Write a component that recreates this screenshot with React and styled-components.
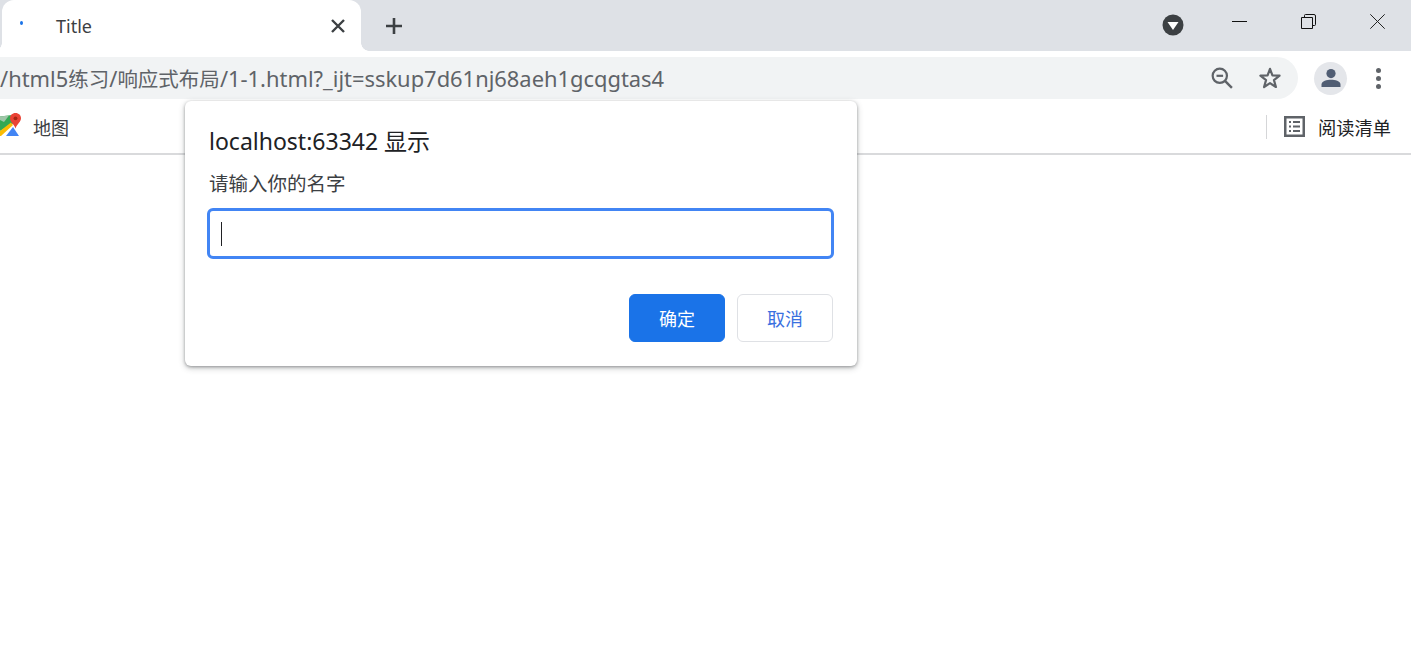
import styled, { createGlobalStyle } from "styled-components";

const GlobalStyle = createGlobalStyle`
  html, body {
    margin: 0;
    height: 100%;
    background: #fff;
    overflow: hidden;
    font-family: "Noto Sans CJK SC", "Noto Sans", sans-serif;
  }
`;

const App = () => {
  return (
    <Page>
      <GlobalStyle />
      <TabStrip>
        <Tab>
          <Favicon />
          <TabTitle>Title</TabTitle>
          <TabClose viewBox="0 0 14 14">
            <path d="M1 1 L13 13 M13 1 L1 13" />
          </TabClose>
        </Tab>
        <NewTab viewBox="0 0 18 18">
          <path d="M9 1 V17 M1 9 H17" />
        </NewTab>
        <Spacer />
        <MediaBadge viewBox="0 0 22 22">
          <circle cx="11" cy="11" r="10.5" fill="#3c4043" />
          <path d="M5.5 8 H16.5 L11 16 Z" fill="#fff" />
        </MediaBadge>
        <WindowButtons>
          <WindowButton>
            <svg width="15" height="15" viewBox="0 0 15 15">
              <path d="M0 7.5 H15" stroke="#111" fill="none" />
            </svg>
          </WindowButton>
          <WindowButton>
            <svg width="15" height="15" viewBox="0 0 15 15">
              <path d="M0.5 3.5 H11.5 V14.5 H0.5 Z M3.5 3 V1.5 Q3.5 0.5 4.5 0.5 H13 Q14.5 0.5 14.5 2 V10.5 Q14.5 11.5 13.5 11.5 H12" stroke="#111" fill="none" />
            </svg>
          </WindowButton>
          <WindowButton>
            <svg width="15" height="15" viewBox="0 0 15 15">
              <path d="M0.3 0.3 L14.7 14.7 M14.7 0.3 L0.3 14.7" stroke="#222" fill="none" />
            </svg>
          </WindowButton>
        </WindowButtons>
      </TabStrip>

      <Toolbar>
        <Omnibox>
          <Url>
            /html5<Han>练习</Han>/<Han>响应式布局</Han>/1-1.html?_ijt=sskup7d61nj68aeh1gcqgtas4
          </Url>
          <OmniIcon viewBox="0 0 20 20">
            <circle cx="8" cy="8" r="6.5" fill="none" stroke="#5f6368" strokeWidth="2" />
            <path d="M5 8 H11" stroke="#5f6368" strokeWidth="2" fill="none" />
            <path d="M12.7 12.7 L19 19" stroke="#5f6368" strokeWidth="2.2" fill="none" />
          </OmniIcon>
          <OmniIcon viewBox="1 1 20 20">
            <path
              d="M11 2.6 L13.2 8.6 L19.7 8.9 L14.6 12.9 L16.4 19.2 L11 15.6 L5.6 19.2 L7.4 12.9 L2.3 8.9 L8.8 8.6 Z"
              fill="none"
              stroke="#5f6368"
              strokeWidth="2"
              strokeLinejoin="round"
            />
          </OmniIcon>
        </Omnibox>
        <Avatar>
          <svg width="20" height="20" viewBox="0 0 20 20">
            <circle cx="10" cy="5.6" r="4.6" fill="#505d73" />
            <path d="M0.5 19 V16.5 C0.5 13 6 11.8 10 11.8 C14 11.8 19.5 13 19.5 16.5 V19 Z" fill="#505d73" />
          </svg>
        </Avatar>
        <MenuDots>
          <Dot />
          <Dot />
          <Dot />
        </MenuDots>
      </Toolbar>

      <BookmarkBar>
        <MapsIcon viewBox="0 0 22 24">
          <path d="M0 3.5 L12 2 L14 10 L0 18 Z" fill="#34a853" />
          <path d="M0 3.5 L9 2.5 L4 9 L0 7 Z" fill="#9fc5a8" />
          <path d="M0 18 L11 9.5 L13 12 L1 23 H0 Z" fill="#fbbc04" />
          <path d="M6 23 L13 14 L19 23 Z" fill="#4285f4" />
          <path d="M15.5 0 C12.2 0 10 2.4 10 5.3 C10 9 14 11 15.5 15.5 C17 11 21 9 21 5.3 C21 2.4 18.8 0 15.5 0 Z" fill="#ea4335" />
          <circle cx="15.5" cy="5.3" r="1.9" fill="#a52714" />
        </MapsIcon>
        <BookmarkLabel>地图</BookmarkLabel>
        <Spacer />
        <Divider />
        <ListIcon viewBox="0 0 21 21">
          <rect x="1.25" y="1.25" width="18.5" height="18.5" fill="none" stroke="#5f6368" strokeWidth="2.5" />
          <path d="M5 6 H7 M9 6 H16 M5 10.5 H7 M9 10.5 H16 M5 15 H7 M9 15 H16" stroke="#5f6368" strokeWidth="2" fill="none" />
        </ListIcon>
        <ReadingLabel>阅读清单</ReadingLabel>
      </BookmarkBar>

      <Dialog>
        <DialogTitle>localhost:63342 显示</DialogTitle>
        <DialogMessage>请输入你的名字</DialogMessage>
        <PromptBox>
          <Caret />
        </PromptBox>
        <DialogButtons>
          <DialogButton $primary>确定</DialogButton>
          <DialogButton>取消</DialogButton>
        </DialogButtons>
      </Dialog>
    </Page>
  );
};

export default App;

const Page = styled.div`
  position: relative;
  width: 1411px;
  height: 667px;
  overflow: hidden;
  background: #fff;
`;

const Spacer = styled.div`
  flex: 1;
`;

const TabStrip = styled.div`
  display: flex;
  align-items: flex-start;
  height: 51px;
  padding-left: 2px;
  background: #dee1e6;
`;

const Tab = styled.div`
  position: relative;
  display: flex;
  align-items: center;
  box-sizing: border-box;
  width: 359px;
  height: 51px;
  padding: 0 16px 0 18px;
  background: #fff;
  border-radius: 12px 12px 0 0;

  &::before,
  &::after {
    content: "";
    position: absolute;
    bottom: 0;
    width: 8px;
    height: 8px;
    background: radial-gradient(circle at var(--cx) 0, #dee1e6 7.5px, #fff 8px);
  }
  &::before {
    --cx: 0;
    left: -8px;
  }
  &::after {
    --cx: 100%;
    right: -8px;
  }
`;

const Favicon = styled.span`
  width: 3px;
  height: 4px;
  margin-top: -6px;
  border-radius: 50%;
  background: #1a73e8;
`;

const TabTitle = styled.span`
  flex: 1;
  margin-left: 33px;
  font-family: "Noto Sans", sans-serif;
  font-size: 18px;
  color: #3c4043;
`;

const TabClose = styled.svg`
  width: 14px;
  height: 14px;
  stroke: #3c4043;
  stroke-width: 2.4;
  fill: none;
`;

const NewTab = styled.svg`
  width: 18px;
  height: 18px;
  margin: 17px 0 0 24px;
  stroke: #3c4043;
  stroke-width: 2.6;
  fill: none;
`;

const MediaBadge = styled.svg`
  width: 22px;
  height: 22px;
  margin: 14px 21px 0 0;
`;

const WindowButtons = styled.div`
  display: flex;
  width: 206px;
`;

const WindowButton = styled.div`
  display: flex;
  justify-content: center;
  width: 69px;
  flex: none;
  padding-top: 14px;
`;

const Toolbar = styled.div`
  display: flex;
  align-items: center;
  height: 54px;
  background: #fff;
`;

const Omnibox = styled.div`
  display: flex;
  align-items: center;
  gap: 26px;
  box-sizing: border-box;
  width: 1298px;
  height: 42px;
  padding-right: 17px;
  background: #f1f3f4;
  border-radius: 0 21px 21px 0;
`;

const Url = styled.div`
  flex: 1;
  font-family: "Noto Sans", "Noto Sans CJK SC", sans-serif;
  font-size: 21.9px;
  line-height: 42px;
  white-space: nowrap;
  color: #5f6368;
`;

const Han = styled.span`
  font-family: "Noto Sans CJK SC", sans-serif;
  font-size: 20.5px;
`;

const OmniIcon = styled.svg`
  width: 22px;
  height: 22px;
`;

const Avatar = styled.div`
  display: flex;
  align-items: center;
  justify-content: center;
  width: 33px;
  height: 33px;
  margin-left: 16px;
  border-radius: 50%;
  background: #e4e6ea;
`;

const MenuDots = styled.div`
  display: flex;
  flex-direction: column;
  align-items: center;
  gap: 3px;
  margin-left: 29px;
`;

const Dot = styled.span`
  width: 5px;
  height: 5px;
  border-radius: 50%;
  background: #5f6368;
`;

const BookmarkBar = styled.div`
  display: flex;
  align-items: center;
  box-sizing: border-box;
  height: 50px;
  padding: 0 20px 4px 0;
  background: #fff;
  border-bottom: 2px solid #d9dadc;
`;

const MapsIcon = styled.svg`
  width: 22px;
  height: 24px;
  margin-top: -4px;
`;

const BookmarkLabel = styled.span`
  margin-left: 11px;
  font-size: 18px;
  color: #3c4043;
`;

const Divider = styled.div`
  width: 1px;
  height: 24px;
  background: #d5d6d8;
`;

const ListIcon = styled.svg`
  width: 21px;
  height: 21px;
  margin: -2px 0 0 17px;
`;

const ReadingLabel = styled.span`
  margin-left: 13px;
  font-size: 18.25px;
  color: #202124;
`;

const Dialog = styled.div`
  position: absolute;
  left: 185px;
  top: 101px;
  box-sizing: border-box;
  width: 672px;
  height: 265px;
  padding: 24px;
  background: #fff;
  border-radius: 6px;
  box-shadow: 0 1px 3px rgba(60, 64, 67, 0.4), 0 2px 6px rgba(60, 64, 67, 0.3);
`;

const DialogTitle = styled.div`
  font-family: "Noto Sans", "Noto Sans CJK SC", sans-serif;
  font-size: 23px;
  line-height: 34px;
  margin-top: -1px;
  color: #202124;
`;

const DialogMessage = styled.div`
  margin-top: 12px;
  font-size: 19.5px;
  line-height: 26px;
  color: #3c4043;
`;

const PromptBox = styled.div`
  display: flex;
  align-items: center;
  box-sizing: border-box;
  height: 51px;
  margin: 12px -1px 0 -2px;
  padding-left: 11px;
  border: 3px solid #4285f4;
  border-radius: 6px;
`;

const Caret = styled.span`
  width: 1px;
  height: 24px;
  background: #202124;
`;

const DialogButtons = styled.div`
  display: flex;
  justify-content: flex-end;
  gap: 12px;
  margin-top: 35px;
`;

const DialogButton = styled.div`
  display: flex;
  align-items: center;
  justify-content: center;
  box-sizing: border-box;
  width: 96px;
  height: 48px;
  font-size: 18px;
  border-radius: 6px;
  border: 1px solid ${(p) => (p.$primary ? "#1a73e8" : "#dfe1e5")};
  background: ${(p) => (p.$primary ? "#1a73e8" : "#fff")};
  color: ${(p) => (p.$primary ? "#fff" : "#3a70e0")};
`;
